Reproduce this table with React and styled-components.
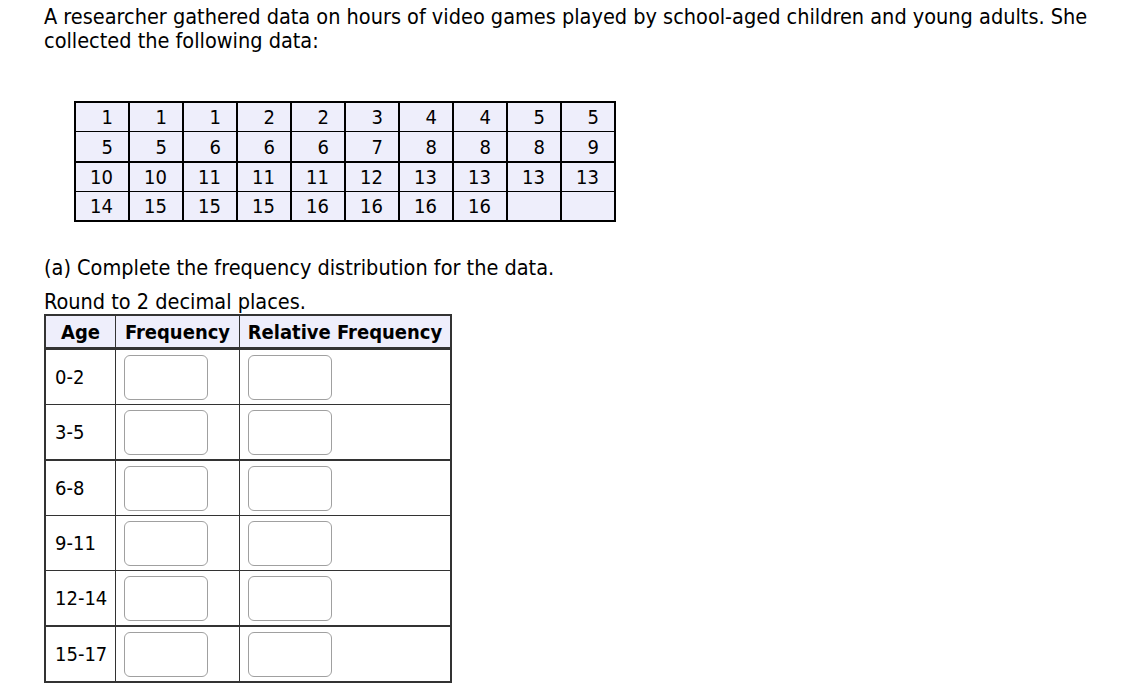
import React from "react";
import styled, { createGlobalStyle } from "styled-components";

const GlobalStyle = createGlobalStyle`
  body {
    margin: 0;
    background: #fff;
    color: #000;
    font-family: "DejaVu Sans Condensed", "DejaVu Sans", sans-serif;
  }
`;

const Page = styled.div`
  padding: 5px 44px 0 44px;
  font-size: 20px;
`;

const Intro = styled.p`
  margin: 0;
  font-size: 21.5px;
  line-height: 24px;
  max-width: 1060px;
`;

const DataTable = styled.table`
  border-collapse: collapse;
  margin: 48px 0 0 30px;
  border: 2px solid #000;
  background: #eeeefb;
`;

const DataCell = styled.td`
  width: 37px;
  height: ${(p) => p.$h}px;
  padding: 0 15px 0 0;
  text-align: right;
  border-left: 2px solid #000;
  border-top: ${(p) => p.$top}px solid #000;
  line-height: 20px;
`;

const Question = styled.p`
  margin: 34px 0 0 0;
  font-size: 21.5px;
  line-height: 24px;
`;

const Note = styled.p`
  margin: 10px 0 0 0;
  font-size: 21.5px;
  line-height: 24px;
`;

const FreqTable = styled.table`
  border-collapse: collapse;
  border: 2px solid #333;
`;

const HeadCell = styled.th`
  background: #eeeefb;
  font-weight: bold;
  height: 31px;
  padding: 0 4px;
  border-left: 1px solid #333;
  border-bottom: 3px solid #333;
  width: ${(p) => p.$w}px;
  white-space: nowrap;
`;

const AgeCell = styled.td`
  height: 54px;
  padding: 0 0 0 9px;
  border-top: ${(p) => p.$top}px solid #333;
  text-align: left;
`;

const InputCell = styled.td`
  height: 54px;
  padding: 0 0 0 8px;
  border-left: 1px solid #333;
  border-top: ${(p) => p.$top}px solid #333;
  vertical-align: middle;
`;

const Box = styled.input`
  display: block;
  box-sizing: border-box;
  width: 84px;
  height: 45px;
  border: 1px solid #a0a0a0;
  border-radius: 6px;
  background: #fff;
  outline: none;
`;

const rows = [
  [1, 1, 1, 2, 2, 3, 4, 4, 5, 5],
  [5, 5, 6, 6, 6, 7, 8, 8, 8, 9],
  [10, 10, 11, 11, 11, 12, 13, 13, 13, 13],
  [14, 15, 15, 15, 16, 16, 16, 16, "", ""],
];

const rowTops = [0, 1, 2, 1];
const rowHeights = [28, 29, 28, 28];

const ages = ["0-2", "3-5", "6-8", "9-11", "12-14", "15-17"];
const ageTops = [0, 1, 2, 1, 1, 2];

const App = () => (
  <Page>
    <GlobalStyle />
    <Intro>
      A researcher gathered data on hours of video games played by
      school-aged children and young adults. She collected the following
      data:
    </Intro>

    <DataTable>
      <tbody>
        {rows.map((row, i) => (
          <tr key={i}>
            {row.map((v, j) => (
              <DataCell key={j} $top={rowTops[i]} $h={rowHeights[i]}>
                {v}
              </DataCell>
            ))}
          </tr>
        ))}
      </tbody>
    </DataTable>

    <Question>(a) Complete the frequency distribution for the data.</Question>
    <Note>Round to 2 decimal places.</Note>

    <FreqTable>
      <thead>
        <tr>
          <HeadCell $w={61}>Age</HeadCell>
          <HeadCell $w={115}>Frequency</HeadCell>
          <HeadCell $w={202}>Relative Frequency</HeadCell>
        </tr>
      </thead>
      <tbody>
        {ages.map((a, i) => (
          <tr key={a}>
            <AgeCell $top={ageTops[i]}>{a}</AgeCell>
            <InputCell $top={ageTops[i]}>
              <Box type="text" aria-label={`Frequency ${a}`} />
            </InputCell>
            <InputCell $top={ageTops[i]}>
              <Box type="text" aria-label={`Relative frequency ${a}`} />
            </InputCell>
          </tr>
        ))}
      </tbody>
    </FreqTable>
  </Page>
);

export default App;
